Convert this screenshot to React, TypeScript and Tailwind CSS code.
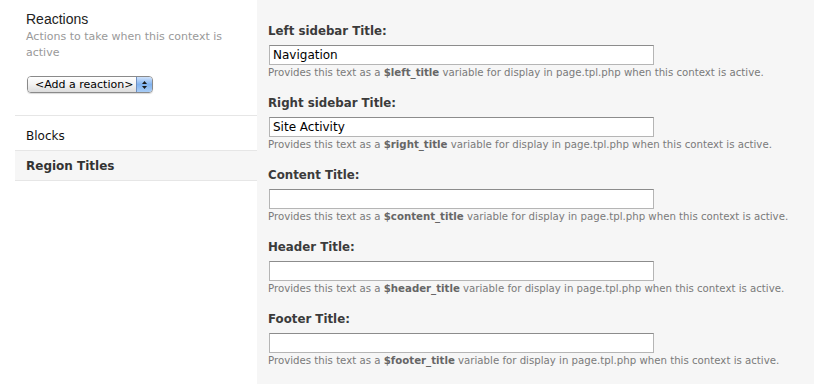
const fields = [
  { label: 'Left sidebar Title:', value: 'Navigation', variable: '$left_title' },
  { label: 'Right sidebar Title:', value: 'Site Activity', variable: '$right_title' },
  { label: 'Content Title:', value: '', variable: '$content_title' },
  { label: 'Header Title:', value: '', variable: '$header_title' },
  { label: 'Footer Title:', value: '', variable: '$footer_title' },
];

function PopupButton() {
  return (
    <div className="ml-[27px] mt-[15px] flex h-[17px] w-[126px] overflow-hidden rounded-[4px] border border-[#8a8a8a] shadow-[0_1px_1px_rgba(0,0,0,0.15)]">
      <div className="flex flex-1 items-center bg-gradient-to-b from-white via-[#f2f2f2] to-[#dcdcdc] pl-[7px] text-[11px] leading-none text-black">
        &lt;Add a reaction&gt;
      </div>
      <div className="flex w-[16px] flex-col items-center justify-center gap-[2px] border-l border-[#6f8fc0] bg-gradient-to-b from-[#cfe2fb] via-[#80b2ef] to-[#a9cdf6]">
        <svg width="5" height="3" viewBox="0 0 5 3">
          <path d="M0 3 L2.5 0 L5 3 Z" fill="#1a1a1a" />
        </svg>
        <svg width="5" height="3" viewBox="0 0 5 3">
          <path d="M0 0 L2.5 3 L5 0 Z" fill="#1a1a1a" />
        </svg>
      </div>
    </div>
  );
}

export default function App() {
  return (
    <div className="flex h-[384px] w-[814px] bg-white font-['DejaVu_Sans',sans-serif]">
      {/* Sidebar */}
      <div className="w-[257px] shrink-0 bg-white">
        <div className="pl-[26px] pt-[10px]">
          <h2 className="font-['Liberation_Sans',sans-serif] text-[14px] leading-[18px] text-[#222]">Reactions</h2>
          <p className="mt-[1px] pr-[20px] text-[11px] leading-[16px] text-[#999]">
            Actions to take when this context is active
          </p>
        </div>
        <PopupButton />
        <div className="ml-[15px] mt-[22px] border-t border-[#e6e6e6]">
          <div className="h-[35px] border-b border-[#e6e6e6] pl-[11px] pt-[12px] text-[12px] leading-[16px] text-[#111]">
            Blocks
          </div>
          <div className="h-[30px] border-b border-[#e6e6e6] bg-[#f6f6f6] pl-[11px] pt-[7px] text-[12px] font-bold leading-[16px] text-[#333]">
            Region Titles
          </div>
        </div>
      </div>

      {/* Region titles form */}
      <div className="flex-1 bg-[#f6f6f6] pl-[11px] pt-[24px]">
        <div className="flex flex-col gap-[16px]">
          {fields.map((f) => (
            <div key={f.label} className="flex flex-col">
              <label className="text-[11.8px] font-bold leading-[15px] text-[#3b3b3b]">{f.label}</label>
              <input
                type="text"
                defaultValue={f.value}
                className="ml-[1px] mt-[6px] h-[20px] w-[385px] border border-[#b5b5b5] border-t-[#8c8c8c] bg-white px-[3px] text-[12px] text-black outline-none"
              />
              <p className="mt-[1px] text-[10.2px] leading-[14px] text-[#7a7a7a]">
                Provides this text as a <strong className="text-[#666]">{f.variable}</strong> variable for display in
                page.tpl.php when this context is active.
              </p>
            </div>
          ))}
        </div>
      </div>
    </div>
  );
}
